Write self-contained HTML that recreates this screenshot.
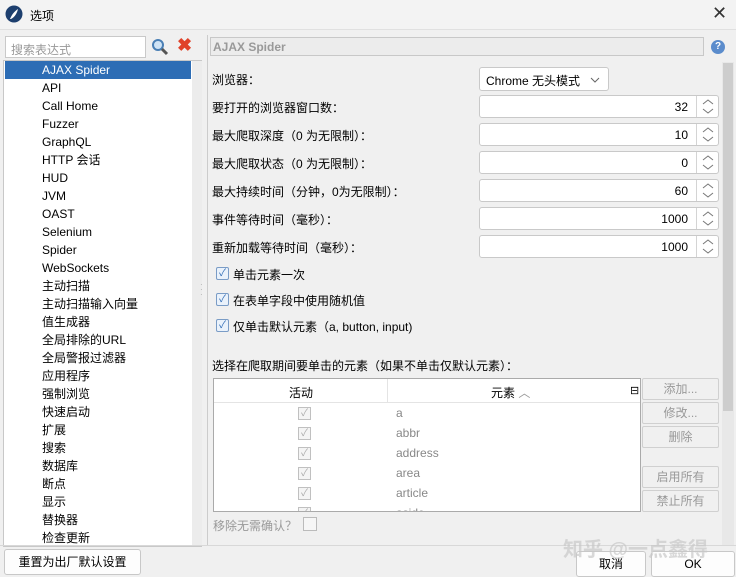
<!DOCTYPE html>
<html><head><meta charset="utf-8"><style>
*{box-sizing:border-box;margin:0;padding:0}
body{width:736px;height:577px;overflow:hidden;background:#f0f0f0;font-family:"Liberation Sans","Noto Sans CJK SC",sans-serif;font-size:12px;color:#000;position:relative}
.a{position:absolute}
.title{left:0;top:0;width:736px;height:30px;background:#f3f3f3;border-bottom:1px solid #e0e0e0}
.list{left:3px;top:60px;width:199px;height:487px;background:#fff;border:1px solid #c8c8c8}
.it{position:absolute;left:38px;height:18px;line-height:18px;font-size:12px}
.sel{left:1px;width:186px;background:#2d6db5;color:#fff;padding-left:37px}
.inp{background:#fff;border:1px solid #c9c9c9;border-radius:3px}
.lab{left:212px;font-size:12px}
.spin{left:479px;width:240px;height:23px}
.spin span{position:absolute;right:30px;top:4px}
.spin svg{position:absolute;right:0;top:0;border-left:1px solid #d4d4d4}
.cb{width:13px;height:13px;border:1px solid #7a9cc6;background:#eaf2fb;border-radius:2px;color:#2f6bb5;font-size:10px;line-height:11px;text-align:center}
.btn{background:#f0f0f0;border:1px solid #d0d0d0;border-radius:2px;color:#999;text-align:center;line-height:20px;left:642px;width:77px;height:22px}
.row{position:absolute;left:0;width:100%;height:20px}
.gcb{position:absolute;left:84px;top:3px;width:13px;height:13px;border:1px solid #c0c0c0;background:#f4f4f4;color:#aaa;font-size:10px;line-height:11px;text-align:center}
.el{position:absolute;left:182px;top:2px;color:#888}
</style></head><body>
<div class="a title"></div>
<svg class="a" style="left:5px;top:5px" width="18" height="18" viewBox="0 0 18 18"><circle cx="9" cy="9" r="8.5" fill="#1d3f6e"/><path d="M5 14 C7 9 10 6 13 4 C12 8 10 12 6 14Z" fill="#fff"/></svg>
<div class="a" style="left:30px;top:7px;font-size:12px">选项</div>
<div class="a" style="left:712px;top:3px;font-size:18px;color:#333">✕</div>

<div class="a inp" style="left:5px;top:36px;width:141px;height:22px;border-radius:0;color:#999;padding:4px 5px">搜索表达式</div>
<svg class="a" style="left:151px;top:38px" width="18" height="18"><circle cx="7" cy="7" r="5" fill="#cfe3f5" stroke="#4a7fb5" stroke-width="2"/><path d="M11 11 L16 16" stroke="#555" stroke-width="3"/></svg>
<div class="a" style="left:177px;top:35px;color:#e0432a;font-size:18px;font-weight:bold">✖</div>

<div class="a list">
<div class="it sel" style="top:0">AJAX Spider</div>
<div class="it" style="top:18px">API</div>
<div class="it" style="top:36px">Call Home</div>
<div class="it" style="top:54px">Fuzzer</div>
<div class="it" style="top:72px">GraphQL</div>
<div class="it" style="top:90px">HTTP 会话</div>
<div class="it" style="top:108px">HUD</div>
<div class="it" style="top:126px">JVM</div>
<div class="it" style="top:144px">OAST</div>
<div class="it" style="top:162px">Selenium</div>
<div class="it" style="top:180px">Spider</div>
<div class="it" style="top:198px">WebSockets</div>
<div class="it" style="top:216px">主动扫描</div>
<div class="it" style="top:234px">主动扫描输入向量</div>
<div class="it" style="top:252px">值生成器</div>
<div class="it" style="top:270px">全局排除的URL</div>
<div class="it" style="top:288px">全局警报过滤器</div>
<div class="it" style="top:306px">应用程序</div>
<div class="it" style="top:324px">强制浏览</div>
<div class="it" style="top:342px">快速启动</div>
<div class="it" style="top:360px">扩展</div>
<div class="it" style="top:378px">搜索</div>
<div class="it" style="top:396px">数据库</div>
<div class="it" style="top:414px">断点</div>
<div class="it" style="top:432px">显示</div>
<div class="it" style="top:450px">替换器</div>
<div class="it" style="top:468px">检查更新</div>
<div style="position:absolute;left:188px;top:0;width:10px;height:485px;background:#ececec"></div>
</div>
<div class="a" style="left:200px;top:282px;color:#aaa;font-size:8px;line-height:5px">·<br>·<br>·</div>

<div class="a" style="left:207px;top:35px;width:1px;height:510px;background:#ccc"></div>
<div class="a" style="left:210px;top:37px;width:494px;height:19px;background:#ececec;border:1px solid #c8c8c8;color:#999;font-weight:bold;padding:2px 2px">AJAX Spider</div>
<div class="a" style="left:711px;top:40px;width:14px;height:14px;border-radius:50%;background:#5b8ccc;color:#fff;font-size:10px;text-align:center;line-height:14px;font-weight:bold">?</div>
<div class="a" style="left:722px;top:62px;width:12px;height:483px;background:#e8e8e8"></div>
<div class="a" style="left:723px;top:63px;width:10px;height:348px;background:#cdcdcd"></div>

<div class="a lab" style="top:71px">浏览器：</div>
<div class="a inp" style="left:479px;top:67px;width:130px;height:24px;padding:4px 6px">Chrome 无头模式<svg style="position:absolute;right:8px;top:9px" width="10" height="6"><path d="M1 1 L5 5 L9 1" fill="none" stroke="#666"/></svg></div>
<div class="a lab" style="top:99px">要打开的浏览器窗口数：</div>
<div class="a inp spin" style="top:95px"><span>32</span><svg width="22" height="21"><path d="M6 8 L11 4 L16 8 M6 13 L11 17 L16 13" fill="none" stroke="#777"/></svg></div>
<div class="a lab" style="top:127px">最大爬取深度（0 为无限制）：</div>
<div class="a inp spin" style="top:123px"><span>10</span><svg width="22" height="21"><path d="M6 8 L11 4 L16 8 M6 13 L11 17 L16 13" fill="none" stroke="#777"/></svg></div>
<div class="a lab" style="top:155px">最大爬取状态（0 为无限制）：</div>
<div class="a inp spin" style="top:151px"><span>0</span><svg width="22" height="21"><path d="M6 8 L11 4 L16 8 M6 13 L11 17 L16 13" fill="none" stroke="#777"/></svg></div>
<div class="a lab" style="top:183px">最大持续时间（分钟，0为无限制）：</div>
<div class="a inp spin" style="top:179px"><span>60</span><svg width="22" height="21"><path d="M6 8 L11 4 L16 8 M6 13 L11 17 L16 13" fill="none" stroke="#777"/></svg></div>
<div class="a lab" style="top:211px">事件等待时间（毫秒）：</div>
<div class="a inp spin" style="top:207px"><span>1000</span><svg width="22" height="21"><path d="M6 8 L11 4 L16 8 M6 13 L11 17 L16 13" fill="none" stroke="#777"/></svg></div>
<div class="a lab" style="top:239px">重新加载等待时间（毫秒）：</div>
<div class="a inp spin" style="top:235px"><span>1000</span><svg width="22" height="21"><path d="M6 8 L11 4 L16 8 M6 13 L11 17 L16 13" fill="none" stroke="#777"/></svg></div>

<div class="a cb" style="left:216px;top:267px">✓</div><div class="a" style="left:233px;top:266px">单击元素一次</div>
<div class="a cb" style="left:216px;top:293px">✓</div><div class="a" style="left:233px;top:292px">在表单字段中使用随机值</div>
<div class="a cb" style="left:216px;top:319px">✓</div><div class="a" style="left:233px;top:318px">仅单击默认元素（a, button, input)</div>
<div class="a lab" style="top:357px">选择在爬取期间要单击的元素（如果不单击仅默认元素）：</div>

<div class="a" style="left:213px;top:378px;width:428px;height:134px;background:#fff;border:1px solid #aaa;overflow:hidden">
<div style="position:absolute;left:0;top:0;width:100%;height:24px;border-bottom:1px solid #e4e4e4"></div>
<div style="position:absolute;left:173px;top:0;width:1px;height:24px;background:#e4e4e4"></div>
<div style="position:absolute;left:75px;top:5px">活动</div>
<div style="position:absolute;left:277px;top:5px">元素 <span style="color:#999">︿</span></div>
<div style="position:absolute;left:416px;top:5px;font-size:11px">⊟</div>
<div class="row" style="top:25px"><div class="gcb">✓</div><div class="el">a</div></div>
<div class="row" style="top:45px"><div class="gcb">✓</div><div class="el">abbr</div></div>
<div class="row" style="top:65px"><div class="gcb">✓</div><div class="el">address</div></div>
<div class="row" style="top:85px"><div class="gcb">✓</div><div class="el">area</div></div>
<div class="row" style="top:105px"><div class="gcb">✓</div><div class="el">article</div></div>
<div class="row" style="top:125px"><div class="gcb">✓</div><div class="el">aside</div></div>
</div>
<div class="a btn" style="top:378px">添加...</div>
<div class="a btn" style="top:402px">修改...</div>
<div class="a btn" style="top:426px">删除</div>
<div class="a btn" style="top:466px">启用所有</div>
<div class="a btn" style="top:490px">禁止所有</div>
<div class="a" style="left:213px;top:517px;color:#999">移除无需确认？</div>
<div class="a" style="left:303px;top:517px;width:14px;height:14px;border:1px solid #bbb;background:#f6f6f6"></div>

<div class="a" style="left:0;top:545px;width:736px;height:1px;background:#d8d8d8"></div>
<div class="a" style="left:4px;top:549px;width:137px;height:26px;background:#fdfdfd;border:1px solid #c8c8c8;border-radius:3px;text-align:center;line-height:24px;font-size:12px">重置为出厂默认设置</div>
<div class="a" style="left:576px;top:551px;width:70px;height:26px;background:#fdfdfd;border:1px solid #c8c8c8;border-radius:3px;text-align:center;line-height:24px;font-size:12px">取消</div>
<div class="a" style="left:651px;top:551px;width:84px;height:26px;background:#fdfdfd;border:1px solid #c8c8c8;border-radius:3px;text-align:center;line-height:24px;font-size:12px">OK</div>
<div class="a" style="left:563px;top:533px;font-size:20px;color:rgba(200,200,200,0.7);font-weight:bold">知乎 @一点鑫得</div>
</body></html>
